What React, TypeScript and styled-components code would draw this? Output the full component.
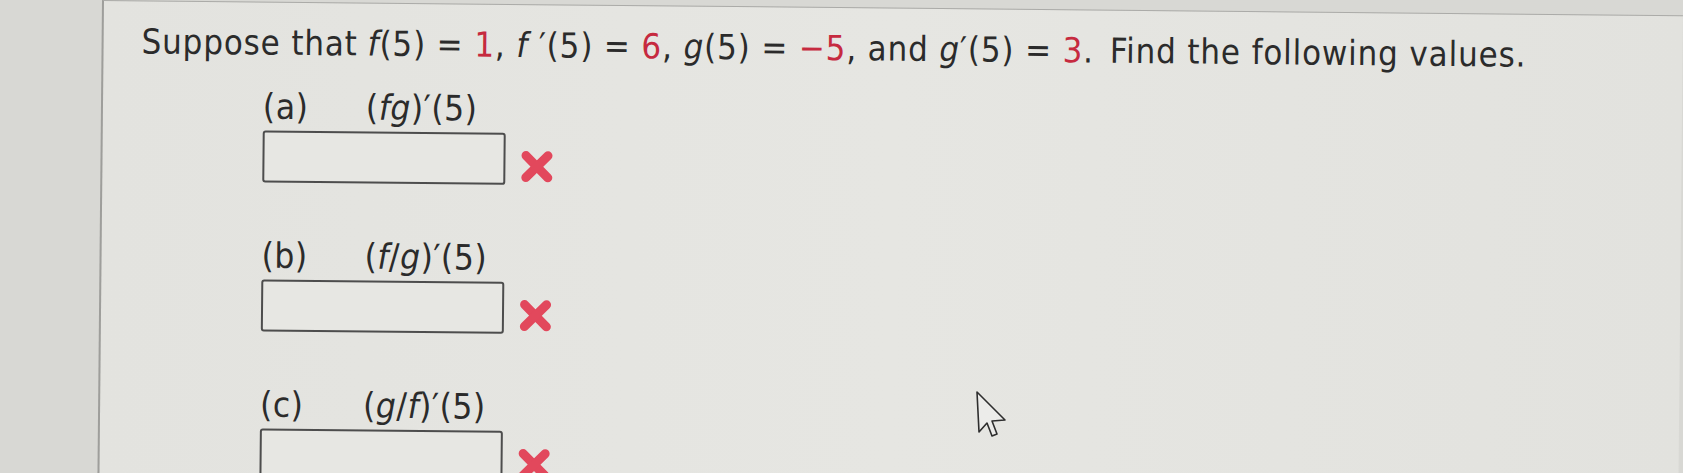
import React from 'react';
import styled, { createGlobalStyle } from 'styled-components';

const GlobalStyle = createGlobalStyle`
    html, body {
        margin: 0;
        height: 100%;
        overflow: hidden;
        background: #d8d8d4;
    }
    #root {
        height: 100%;
    }
`;

/**
 * The photographed monitor: a grey strip on the left, the assignment panel on the right
 */
const Screen = styled.div`
    position: relative;
    display: flex;
    height: 100%;
    padding-left: 102px;
    box-sizing: border-box;
`;

const Panel = styled.div`
    flex: 1;
    border-left: 2px solid #9e9e9b;
    border-top: 1.5px solid #ababa8;
    background: linear-gradient(90deg, #e3e3df 0%, #e6e6e2 50%, #e2e2de 100%);
    padding: 20px 0 0 38px;
    transform: rotate(0.55deg);
    transform-origin: 0 0;
    font-family: "DejaVu Sans Condensed", "DejaVu Sans", "Liberation Sans", sans-serif;
    font-stretch: condensed;
    font-size: 35px;
    line-height: 40px;
    color: #2b2b2b;
`;

const Prompt = styled.div`
    white-space: nowrap;
    font-size: 34.5px;
    letter-spacing: 0.85px;
`;

const Gap = styled.span<{ $w: number }>`
    display: inline-block;
    width: ${p => p.$w}px;
`;

const Num = styled.span`
    color: #c62a3f;
`;

const Var = styled.i`
    font-style: italic;
`;

const QuestionList = styled.div`
    margin-top: 24px;
    padding-left: 122px;
`;

const Question = styled.div`
    margin-bottom: 53px;
`;

const Label = styled.div`
    display: flex;
    white-space: nowrap;
    letter-spacing: 0.5px;
`;

const Letter = styled.span`
    width: 103px;
`;

const AnswerRow = styled.div`
    display: flex;
    align-items: flex-start;
    gap: 15px;
    margin-top: 4px;
`;

const AnswerBox = styled.div`
    width: 243px;
    height: 52px;
    box-sizing: border-box;
    border: 2px solid #4d4d4d;
    border-radius: 3px;
    background: #e7e7e3;
`;

const Mark = styled.svg`
    margin-top: 17px;
    flex: none;
`;

const Cursor = styled.svg`
    position: absolute;
    left: 974px;
    top: 389px;
`;

function WrongMark() {
    return <Mark width="33" height="33" viewBox="0 0 33 33">
        <g stroke="#e2485c" strokeWidth="9" strokeLinecap="round">
            <line x1="5.5" y1="5.5" x2="27.5" y2="27.5" />
            <line x1="27.5" y1="5.5" x2="5.5" y2="27.5" />
        </g>
    </Mark>;
}

const questions = [
    { letter: '(a)', expr: <>(<Var>fg</Var>)′(5)</> },
    { letter: '(b)', expr: <>(<Var>f</Var>/<Var>g</Var>)′(5)</> },
    { letter: '(c)', expr: <>(<Var>g</Var>/<Var>f</Var>)′(5)</> },
];

export default function App() {
    return <>
        <GlobalStyle />
        <Screen>
            <Panel>
                <Prompt>
                    Suppose that<Gap $w={10} /><Var>f</Var>(5) = <Num>1</Num>, <Var>f</Var> ′(5) = <Num>6</Num>, <Var>g</Var>(5) = <Num>−5</Num>, and <Var>g</Var>′(5) = <Num>3</Num>.<Gap $w={16} />Find the following values.
                </Prompt>

                <QuestionList>
                    {questions.map(q =>
                        <Question key={q.letter}>
                            <Label>
                                <Letter>{q.letter}</Letter>
                                <span>{q.expr}</span>
                            </Label>
                            <AnswerRow>
                                <AnswerBox />
                                <WrongMark />
                            </AnswerRow>
                        </Question>
                    )}
                </QuestionList>
            </Panel>

            <Cursor width="34" height="50" viewBox="0 0 34 50">
                <path d="M3 3 L5 43 L13 34 L18 47 L23 45 L18 32 L31 31 Z"
                      fill="#ececea" stroke="#2e2e2e" strokeWidth="1.6" strokeLinejoin="round" />
            </Cursor>
        </Screen>
    </>;
}
